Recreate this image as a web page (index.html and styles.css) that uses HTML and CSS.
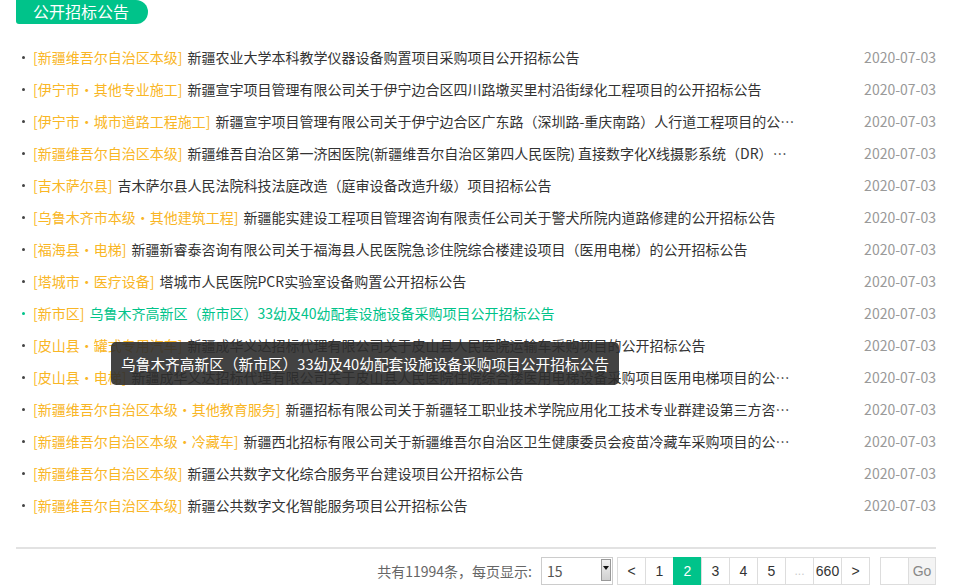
FILE: index.html
```html
<!DOCTYPE html>
<html lang="zh-CN">
<head>
<meta charset="utf-8">
<title>公开招标公告</title>
<link rel="stylesheet" href="styles.css">
</head>
<body>
<div class="wrap">
  <div class="tab">公开招标公告</div>
  <ul class="list">
    <li class="row"><span class="dot"></span><a class="link"><span class="cat">[新疆维吾尔自治区本级]</span>新疆农业大学本科教学仪器设备购置项目采购项目公开招标公告</a><span class="date">2020-07-03</span></li>
    <li class="row"><span class="dot"></span><a class="link"><span class="cat">[伊宁市・其他专业施工]</span>新疆宣宇项目管理有限公司关于伊宁边合区四川路墩买里村沿街绿化工程项目的公开招标公告</a><span class="date">2020-07-03</span></li>
    <li class="row"><span class="dot"></span><a class="link"><span class="cat">[伊宁市・城市道路工程施工]</span>新疆宣宇项目管理有限公司关于伊宁边合区广东路（深圳路-重庆南路）人行道工程项目的公开招标公告</a><span class="date">2020-07-03</span></li>
    <li class="row"><span class="dot"></span><a class="link"><span class="cat">[新疆维吾尔自治区本级]</span>新疆维吾自治区第一济困医院(新疆维吾尔自治区第四人民医院) 直接数字化X线摄影系统（DR）采购项目公开招标公告</a><span class="date">2020-07-03</span></li>
    <li class="row"><span class="dot"></span><a class="link"><span class="cat">[吉木萨尔县]</span>吉木萨尔县人民法院科技法庭改造（庭审设备改造升级）项目招标公告</a><span class="date">2020-07-03</span></li>
    <li class="row"><span class="dot"></span><a class="link"><span class="cat">[乌鲁木齐市本级・其他建筑工程]</span>新疆能实建设工程项目管理咨询有限责任公司关于警犬所院内道路修建的公开招标公告</a><span class="date">2020-07-03</span></li>
    <li class="row"><span class="dot"></span><a class="link"><span class="cat">[福海县・电梯]</span>新疆新睿泰咨询有限公司关于福海县人民医院急诊住院综合楼建设项目（医用电梯）的公开招标公告</a><span class="date">2020-07-03</span></li>
    <li class="row"><span class="dot"></span><a class="link"><span class="cat">[塔城市・医疗设备]</span>塔城市人民医院PCR实验室设备购置公开招标公告</a><span class="date">2020-07-03</span></li>
    <li class="row hover"><span class="dot"></span><a class="link"><span class="cat">[新市区]</span>乌鲁木齐高新区（新市区）33幼及40幼配套设施设备采购项目公开招标公告</a><span class="date">2020-07-03</span></li>
    <li class="row"><span class="dot"></span><a class="link"><span class="cat">[皮山县・罐式专用汽车]</span>新疆成华义达招标代理有限公司关于皮山县人民医院运输车采购项目的公开招标公告</a><span class="date">2020-07-03</span></li>
    <li class="row"><span class="dot"></span><a class="link"><span class="cat">[皮山县・电梯]</span>新疆成华义达招标代理有限公司关于皮山县人民医院住院综合楼医用电梯设备采购项目医用电梯项目的公开招标公告</a><span class="date">2020-07-03</span></li>
    <li class="row"><span class="dot"></span><a class="link"><span class="cat">[新疆维吾尔自治区本级・其他教育服务]</span>新疆招标有限公司关于新疆轻工职业技术学院应用化工技术专业群建设第三方咨询服务项目的公开招标公告</a><span class="date">2020-07-03</span></li>
    <li class="row"><span class="dot"></span><a class="link"><span class="cat">[新疆维吾尔自治区本级・冷藏车]</span>新疆西北招标有限公司关于新疆维吾尔自治区卫生健康委员会疫苗冷藏车采购项目的公开招标公告</a><span class="date">2020-07-03</span></li>
    <li class="row"><span class="dot"></span><a class="link"><span class="cat">[新疆维吾尔自治区本级]</span>新疆公共数字文化综合服务平台建设项目公开招标公告</a><span class="date">2020-07-03</span></li>
    <li class="row"><span class="dot"></span><a class="link"><span class="cat">[新疆维吾尔自治区本级]</span>新疆公共数字文化智能服务项目公开招标公告</a><span class="date">2020-07-03</span></li>
  </ul>
  <div class="divider"></div>
  <div class="pager">
    <span class="total">共有11994条，每页显示:</span>
    <div class="select"><span class="sel-val">15</span><span class="sel-btn"><span class="tri"></span></span></div>
    <div class="pages">
      <span class="pg">&lt;</span>
      <span class="pg">1</span>
      <span class="pg active">2</span>
      <span class="pg">3</span>
      <span class="pg">4</span>
      <span class="pg">5</span>
      <span class="pg dots">...</span>
      <span class="pg">660</span>
      <span class="pg">&gt;</span>
    </div>
    <div class="jump"><span class="jump-input"></span><span class="go">Go</span></div>
  </div>
  <div class="tooltip">乌鲁木齐高新区（新市区）33幼及40幼配套设施设备采购项目公开招标公告</div>
</div>
</body>
</html>
```
FILE: styles.css
```css
html, body {
  margin: 0;
  padding: 0;
  background: #fff;
}
body {
  font-family: "Noto Sans CJK SC", "Noto Sans", sans-serif;
  font-size: 14px;
  color: #333;
  overflow: hidden;
}
.wrap {
  position: relative;
  width: 920px;
  margin-left: 16px;
}
.tab {
  display: inline-block;
  width: 132px;
  height: 24px;
  line-height: 22px;
  box-sizing: border-box;
  padding-left: 17px;
  background: #00c38a;
  color: #fff;
  font-size: 16px;
  border-radius: 0 12px 12px 3px;
  vertical-align: top;
}
.list {
  list-style: none;
  margin: 17px 0 0;
  padding: 0;
}
.row {
  display: flex;
  align-items: center;
  height: 32px;
}
.dot {
  flex: none;
  width: 3px;
  height: 3px;
  border-radius: 50%;
  background: #444;
  margin: 1px 8px 0 6px;
}
.link {
  flex: 1;
  min-width: 0;
  white-space: nowrap;
  overflow: hidden;
  text-overflow: ellipsis;
  margin-right: 66px;
  color: #333;
}
.cat {
  color: #f9b625;
  margin-right: 5px;
}
.date {
  flex: none;
  color: #999;
}
.row.hover .dot {
  background: #00c38a;
}
.row.hover .link {
  color: #00c38a;
}
.divider {
  height: 2px;
  background: #e2e2e2;
  margin-top: 26px;
}
.pager {
  display: flex;
  justify-content: flex-end;
  align-items: center;
  margin-top: 8px;
  height: 28px;
}
.total {
  color: #666;
  margin-right: 9px;
}
.select {
  display: flex;
  width: 72px;
  height: 28px;
  box-sizing: border-box;
  border: 1px solid #ccc;
  margin-right: 4px;
}
.sel-val {
  flex: 1;
  padding-left: 5px;
  line-height: 26px;
  color: #555;
}
.sel-btn {
  flex: none;
  width: 10px;
  height: 22px;
  margin: 1px 1px 0 0;
  background: linear-gradient(#f0f0f0, #d0d0d0);
  border: 1px solid #999;
  box-sizing: border-box;
  display: flex;
  justify-content: center;
  padding-top: 6px;
}
.tri {
  width: 0;
  height: 0;
  border-left: 3px solid transparent;
  border-right: 3px solid transparent;
  border-top: 4px solid #111;
}
.pages {
  display: flex;
  padding-left: 1px;
}
.pg {
  width: 29px;
  height: 28px;
  box-sizing: border-box;
  margin-left: -1px;
  border: 1px solid #ddd;
  text-align: center;
  line-height: 26px;
  font-family: "Liberation Sans", Arial, sans-serif;
  font-size: 14px;
  color: #333;
}
.pg.active {
  background: #00c38a;
  border-color: #00c38a;
  color: #fff;
}
.pg.dots {
  color: #ccc;
  font-size: 12px;
}
.jump {
  display: flex;
  margin-left: 10px;
}
.jump-input {
  width: 29px;
  height: 28px;
  box-sizing: border-box;
  border: 1px solid #ddd;
}
.go {
  width: 28px;
  height: 28px;
  box-sizing: border-box;
  margin-left: -1px;
  border: 1px solid #ddd;
  background: #f4f4f4;
  text-align: center;
  line-height: 26px;
  font-family: "Liberation Sans", Arial, sans-serif;
  font-size: 14px;
  color: #888;
}
.tooltip {
  position: absolute;
  left: 95px;
  top: 342px;
  height: 43px;
  line-height: 43px;
  padding: 0 10px;
  background: rgba(45, 45, 45, 0.9);
  border-radius: 5px;
  color: #fff;
  font-size: 14.7px;
  white-space: nowrap;
}
```
